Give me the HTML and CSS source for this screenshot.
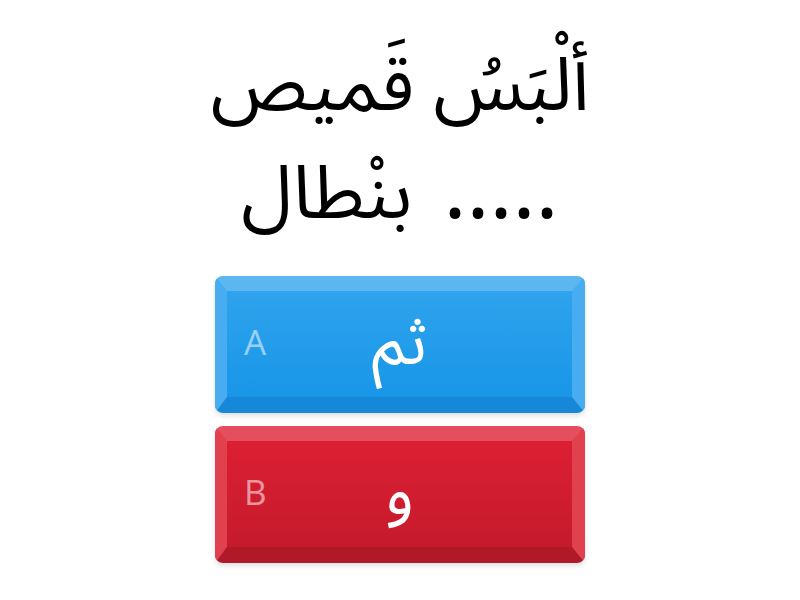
FILE: index.html
```html
<!DOCTYPE html>
<html lang="ar">
<head>
<meta charset="utf-8">
<link rel="stylesheet" href="styles.css">
</head>
<body>
<main class="page">
  <h1 class="question" dir="rtl">ألْبَسُ قَميص <span class="blank">.....</span> بنْطال</h1>
  <div class="answers">
    <button class="answer blue"><span class="key">A</span><span class="word" dir="rtl">ثم</span></button>
    <button class="answer red"><span class="key">B</span><span class="word" dir="rtl">و</span></button>
  </div>
</main>
</body>
</html>
```
FILE: styles.css
```css
html, body {
  margin: 0;
  padding: 0;
  background: #ffffff;
}
.page {
  width: 800px;
  height: 600px;
  display: flex;
  flex-direction: column;
  align-items: center;
  padding-top: 33px;
  box-sizing: border-box;
}
.question {
  margin: 0;
  max-width: 440px;
  text-align: center;
  font-family: "Noto Sans Arabic", "DejaVu Sans", sans-serif;
  font-weight: normal;
  font-size: 74px;
  line-height: 108px;
  color: #000;
}
.blank {
  font-size: 86px;
  line-height: 0;
  letter-spacing: 10px;
  padding-left: 12px;
}
.answers {
  margin-top: 27px;
  display: flex;
  flex-direction: column;
  gap: 13px;
}
.answer {
  position: relative;
  width: 370px;
  height: 137px;
  box-sizing: border-box;
  border-style: solid;
  border-width: 15px 13px 16px 12px;
  border-radius: 8px;
  padding: 0;
  margin: 0;
  display: flex;
  align-items: center;
  justify-content: center;
  box-shadow: 0 3px 5px rgba(0, 0, 0, 0.12);
  cursor: pointer;
}
.blue {
  background: linear-gradient(#2fa3ec, #1896e8);
  border-top-color: #5cb6f0;
  border-left-color: #47acf0;
  border-right-color: #47acf0;
  border-bottom-color: #1787d8;
}
.red {
  background: linear-gradient(#dc1f33, #c51b2c);
  border-top-color: #e44e5e;
  border-left-color: #e1404f;
  border-right-color: #e1404f;
  border-bottom-color: #b01a28;
}
.key {
  position: absolute;
  left: 17px;
  top: 33px;
  font-family: "Open Sans", sans-serif;
  font-weight: 400;
  font-size: 35px;
  line-height: 36px;
  color: rgba(255, 255, 255, 0.55);
}
.word {
  font-family: "Noto Sans Arabic", "DejaVu Sans", sans-serif;
  font-size: 64px;
  line-height: 64px;
  color: #ffffff;
}
```
